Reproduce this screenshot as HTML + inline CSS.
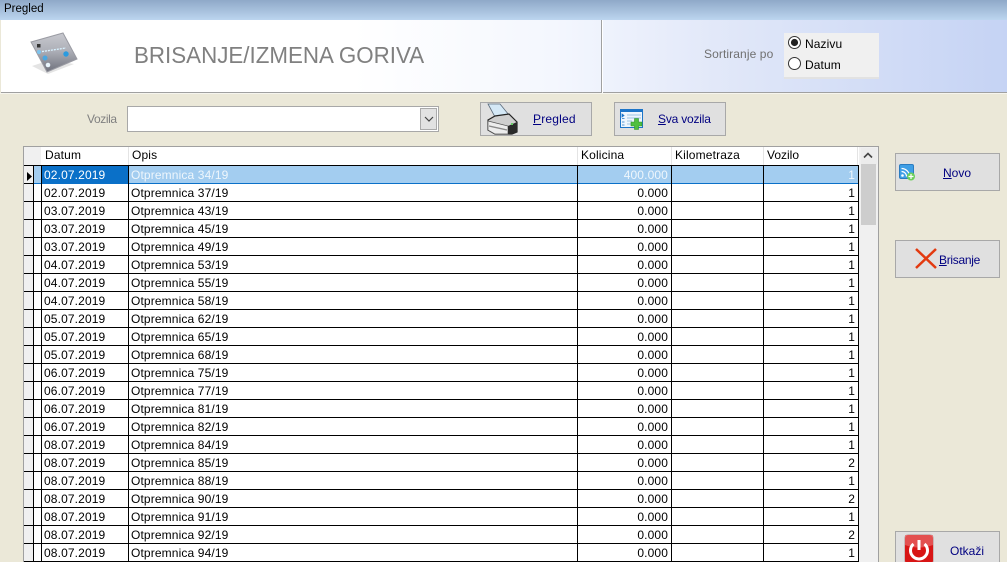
<!DOCTYPE html>
<html><head><meta charset="utf-8"><style>
*{box-sizing:border-box}
html,body{margin:0;padding:0;width:1007px;height:562px;overflow:hidden}
body{position:relative;background:#ebe8d8;font-family:"Liberation Sans",sans-serif;font-size:12px;color:#000}
div,span,svg{position:absolute}
.t{white-space:nowrap;line-height:14px}
.btn{background:#e0e0e0;border:1px solid #a8a8a8}
.btxt{color:#000080;white-space:nowrap;line-height:14px;letter-spacing:.2px}
u{text-decoration:underline}
.r{left:0;width:834px;height:18px;border-bottom:1px solid #000;background:#fff}
.r span{top:1px;line-height:16px;white-space:nowrap;letter-spacing:.13px}
.d{left:20px}.o{left:107px}.k{right:190px}.v{right:3px}
.vl{top:0;width:1px;background:#000;height:397px}
.hd{top:1px;height:18px;line-height:17px;white-space:nowrap;letter-spacing:.15px}
.hv{top:1px;width:1px;height:18px;background:#e4e4e4}
</style></head><body>
<div style="left:0;top:0;width:1007px;height:20px;background:linear-gradient(#8fa9c8,#bcd5ef)"></div>
<div class="t" style="left:4px;top:2px;font-size:11.5px">Pregled</div>
<div style="left:1px;top:20px;width:1006px;height:73px;background:linear-gradient(90deg,#fff 0,#fff 35%,#f4f7fe 55%,#e3e9f9 70%,#c5d3f4 100%);border-bottom:1px solid #a0a0a0"></div>
<div style="left:0;top:93px;width:1007px;height:1px;background:#f6f5ee"></div>
<div style="left:601px;top:20px;width:1px;height:73px;background:#a0a0a0"></div>
<div style="left:602px;top:20px;width:1px;height:73px;background:#fff"></div>
<svg style="left:28px;top:30px" width="52" height="46" viewBox="0 0 52 46">
<defs><linearGradient id="g" x1="0" y1="0" x2="0" y2="1"><stop offset="0" stop-color="#c8c9cf"/><stop offset=".45" stop-color="#aeb0b8"/><stop offset="1" stop-color="#6f717c"/></linearGradient></defs>
<path d="M4 36l16 8 26-10-24-4z" fill="#c4c4c4" opacity=".45"/>
<path d="M3 12L35 3 49 29 19 42z" fill="url(#g)" stroke="#9a9ba3"/>
<path d="M11 22L38 18" stroke="#d8f2ff" stroke-width="1.3" stroke-dasharray="2 1"/>
<circle cx="17" cy="28" r="2.5" fill="#4ba7e0"/><circle cx="38" cy="24" r="2.7" fill="#2a9be0"/><circle cx="20" cy="35" r="2.3" fill="#e9f5fc"/><circle cx="11" cy="22" r="2" fill="#7cc4ee"/>
<rect x="9" y="14" width="3.5" height="3.5" fill="#333"/>
</svg>
<div class="t" id="ti" style="left:134px;top:41px;font-size:23.5px;line-height:28px;color:#808080;transform:scaleX(.951);transform-origin:left center">BRISANJE/IZMENA GORIVA</div>
<div class="t" style="left:704px;top:47px;color:#707070;letter-spacing:.1px">Sortiranje po</div>
<div style="left:784px;top:33px;width:95px;height:46px;background:#f0f0f0;border-bottom:2px solid #e2e2e2"></div>
<svg style="left:787px;top:35px" width="16" height="37" viewBox="0 0 16 37">
<circle cx="7.5" cy="7.5" r="6" fill="#fff" stroke="#333"/><circle cx="7.5" cy="7.5" r="3.6" fill="#222"/>
<circle cx="7.5" cy="28.5" r="6" fill="#fff" stroke="#333"/></svg>
<div class="t" style="left:805px;top:37px;letter-spacing:.1px">Nazivu</div>
<div class="t" style="left:805px;top:58px;letter-spacing:.1px">Datum</div>
<div class="t" style="left:87px;top:112px;color:#808080;letter-spacing:-.4px">Vozila</div>
<div style="left:127px;top:106px;width:312px;height:26px;background:#fff;border:1px solid #a8a8a8"></div>
<div style="left:420px;top:108px;width:17px;height:22px;background:#e2e2e2;border:1px solid #aaa"></div>
<svg style="left:424px;top:116px" width="10" height="6"><path d="M1 1l4 4 4-4" fill="none" stroke="#444" stroke-width="1.2"/></svg>
<div class="btn" style="left:480px;top:102px;width:112px;height:34px"></div>
<svg style="left:486px;top:102px" width="34" height="34" viewBox="0 0 34 34">
<path d="M2 2H14L23 13 9 15z" fill="#d4e8f6" stroke="#5a6a7a" stroke-width=".8"/>
<path d="M2 18L9 14 23 12 31 20V30L26 32H9L2 28z" fill="#cfcfcf" stroke="#222" stroke-width="1.2"/>
<path d="M2 19L22 24V32H9L2 28z" fill="#ececec" stroke="#555" stroke-width=".7"/>
<path d="M3 24L21 28" stroke="#888" stroke-width="1.4"/>
<path d="M22 24L31 20V30L26 32H22z" fill="#2a2a2a"/>
<rect x="25" y="21" width="2" height="2" fill="#6c6"/></svg>
<div class="btxt" style="left:533px;top:112px"><u>P</u>regled</div>
<div class="btn" style="left:614px;top:102px;width:112px;height:34px"></div>
<svg style="left:620px;top:109px" width="24" height="21" viewBox="0 0 24 21">
<rect x=".5" y=".5" width="22" height="18" fill="#eef6fd" stroke="#1c75c8"/><rect x="0" y="0" width="23" height="3" fill="#1c75c8"/>
<path d="M7 6h14M7 9h14M7 12h5M7 15h4" stroke="#9cc4e4"/>
<path d="M2 5l2 1.500L2 8zM2 9.500h2.500M2 13h2.500M2 16h2.500" fill="#1c75c8" stroke="#1c75c8" stroke-width=".8"/>
<path d="M14.500 9.500h4v3.500h3.500v4h-3.500v3.500h-4V17H11v-4h3.500z" fill="#4fc03f" stroke="#2e8f2a" stroke-width=".6"/></svg>
<div class="btxt" style="left:658px;top:112px;letter-spacing:-.2px"><u>S</u>va vozila</div>
<div class="btn" style="left:895px;top:153px;width:105px;height:38px"></div>
<svg style="left:899px;top:164px" width="17" height="17" viewBox="0 0 17 17">
<rect x=".5" y=".5" width="14" height="14" rx="1.500" fill="#3f9fe6" stroke="#2b7cc0"/>
<circle cx="3.500" cy="11.500" r="1.300" fill="#fff"/><path d="M2.500 7.500a5 5 0 0 1 5 5M2.500 4.500a8 8 0 0 1 8 8" fill="none" stroke="#fff" stroke-width="1.200"/>
<circle cx="12" cy="12.500" r="4" fill="#6ccf5c"/><path d="M12 10v5M9.500 12.500h5" stroke="#fff" stroke-width="1.200"/></svg>
<div class="btxt" style="left:943px;top:166px;letter-spacing:0"><u>N</u>ovo</div>
<div class="btn" style="left:895px;top:240px;width:105px;height:38px"></div>
<svg style="left:915px;top:248px" width="22" height="21" viewBox="0 0 22 21"><path d="M1 1l20 19M21 1L1 20" stroke="#e33a10" stroke-width="2.500"/></svg>
<div class="btxt" style="left:939px;top:253px;letter-spacing:-.3px"><u>B</u>risanje</div>
<div class="btn" style="left:895px;top:531px;width:105px;height:40px"></div>
<svg style="left:904px;top:534px" width="30" height="28" viewBox="0 0 30 28">
<rect x=".5" y=".5" width="29" height="30" rx="4" fill="#d81515" stroke="#c9b9b9"/><path d="M1 1h28v10q-14 5-28 0z" fill="#e86a6a" opacity=".7"/>
<path d="M9.500 10a8.500 8.500 0 1 0 11 0" fill="none" stroke="#fff" stroke-width="3"/><path d="M15 6v10" stroke="#fff" stroke-width="3"/></svg>
<div class="btxt" style="left:950px;top:544px;letter-spacing:0">Otkaži</div>
<!-- grid -->
<div style="left:23px;top:146px;width:856px;height:420px;background:#f0f0f0;border:1px solid #a0a0a0;overflow:hidden">
<div style="left:0;top:0;width:17px;height:19px;background:#f0f0f0"></div>
<div style="left:17px;top:0;width:818px;height:19px;background:#fff"></div>
<div class="hd" style="left:21px;top:0">Datum</div>
<div class="hd" style="left:108px;top:0">Opis</div>
<div class="hd" style="left:557px;top:0">Kolicina</div>
<div class="hd" style="left:651px;top:0">Kilometraza</div>
<div class="hd" style="left:743px;top:0;letter-spacing:0">Vozilo</div>
<div class="hv" style="left:104px;top:0"></div><div class="hv" style="left:553px;top:0"></div><div class="hv" style="left:647px;top:0"></div><div class="hv" style="left:739px;top:0"></div><div class="hv" style="left:833px;top:0"></div>
<div style="left:0;top:18px;width:835px;height:1px;background:#000"></div>
<div style="left:0;top:19px;width:835px;height:400px">
<div style="left:0;top:0;width:9px;height:400px;background:#f0f0f0"></div>
<div class="r" style="top:0;background:#a3cdf0;border-bottom:1px solid #0a70c8;color:#eef6fc"><span class="d" style="left:17px;width:88px;background:#0a70c8;top:0;height:17px;padding:1px 0 0 3px;color:#fff;line-height:16px">02.07.2019</span><span class="o">Otpremnica 34/19</span><span class="k">400.000</span><span class="v">1</span></div>
<div class="r" style="top:18px"><span class="d">02.07.2019</span><span class="o">Otpremnica 37/19</span><span class="k">0.000</span><span class="v">1</span></div>
<div class="r" style="top:36px"><span class="d">03.07.2019</span><span class="o">Otpremnica 43/19</span><span class="k">0.000</span><span class="v">1</span></div>
<div class="r" style="top:54px"><span class="d">03.07.2019</span><span class="o">Otpremnica 45/19</span><span class="k">0.000</span><span class="v">1</span></div>
<div class="r" style="top:72px"><span class="d">03.07.2019</span><span class="o">Otpremnica 49/19</span><span class="k">0.000</span><span class="v">1</span></div>
<div class="r" style="top:90px"><span class="d">04.07.2019</span><span class="o">Otpremnica 53/19</span><span class="k">0.000</span><span class="v">1</span></div>
<div class="r" style="top:108px"><span class="d">04.07.2019</span><span class="o">Otpremnica 55/19</span><span class="k">0.000</span><span class="v">1</span></div>
<div class="r" style="top:126px"><span class="d">04.07.2019</span><span class="o">Otpremnica 58/19</span><span class="k">0.000</span><span class="v">1</span></div>
<div class="r" style="top:144px"><span class="d">05.07.2019</span><span class="o">Otpremnica 62/19</span><span class="k">0.000</span><span class="v">1</span></div>
<div class="r" style="top:162px"><span class="d">05.07.2019</span><span class="o">Otpremnica 65/19</span><span class="k">0.000</span><span class="v">1</span></div>
<div class="r" style="top:180px"><span class="d">05.07.2019</span><span class="o">Otpremnica 68/19</span><span class="k">0.000</span><span class="v">1</span></div>
<div class="r" style="top:198px"><span class="d">06.07.2019</span><span class="o">Otpremnica 75/19</span><span class="k">0.000</span><span class="v">1</span></div>
<div class="r" style="top:216px"><span class="d">06.07.2019</span><span class="o">Otpremnica 77/19</span><span class="k">0.000</span><span class="v">1</span></div>
<div class="r" style="top:234px"><span class="d">06.07.2019</span><span class="o">Otpremnica 81/19</span><span class="k">0.000</span><span class="v">1</span></div>
<div class="r" style="top:252px"><span class="d">06.07.2019</span><span class="o">Otpremnica 82/19</span><span class="k">0.000</span><span class="v">1</span></div>
<div class="r" style="top:270px"><span class="d">08.07.2019</span><span class="o">Otpremnica 84/19</span><span class="k">0.000</span><span class="v">1</span></div>
<div class="r" style="top:288px"><span class="d">08.07.2019</span><span class="o">Otpremnica 85/19</span><span class="k">0.000</span><span class="v">2</span></div>
<div class="r" style="top:306px"><span class="d">08.07.2019</span><span class="o">Otpremnica 88/19</span><span class="k">0.000</span><span class="v">1</span></div>
<div class="r" style="top:324px"><span class="d">08.07.2019</span><span class="o">Otpremnica 90/19</span><span class="k">0.000</span><span class="v">2</span></div>
<div class="r" style="top:342px"><span class="d">08.07.2019</span><span class="o">Otpremnica 91/19</span><span class="k">0.000</span><span class="v">1</span></div>
<div class="r" style="top:360px"><span class="d">08.07.2019</span><span class="o">Otpremnica 92/19</span><span class="k">0.000</span><span class="v">2</span></div>
<div class="r" style="top:378px"><span class="d">08.07.2019</span><span class="o">Otpremnica 94/19</span><span class="k">0.000</span><span class="v">1</span></div>
<div style="left:0;top:0;width:9px;height:400px;background:#f0f0f0"></div>
<div style="left:0;top:0;width:9px;height:400px;background:repeating-linear-gradient(transparent 0 17px,#000 17px 18px)"></div>
<div class="vl" style="left:9px"></div><div class="vl" style="left:17px"></div><div class="vl" style="left:104px"></div><div class="vl" style="left:553px"></div><div class="vl" style="left:647px"></div><div class="vl" style="left:739px"></div><div class="vl" style="left:834px"></div>
<svg style="left:3px;top:6px" width="6" height="9"><path d="M0 0l5 4.500L0 9z" fill="#000"/></svg>
</div>
<div style="left:837px;top:0;width:17px;height:418px;background:#f0f0f0"></div>
<div style="left:837px;top:1px;width:16px;height:17px;background:#ececec"></div>
<svg style="left:839px;top:5px" width="10" height="7"><path d="M1 5.500l4-4 4 4" fill="none" stroke="#444" stroke-width="1.600"/></svg>
<div style="left:837px;top:17px;width:15px;height:61px;background:#cdcdcd"></div>
</div>
</body></html>
